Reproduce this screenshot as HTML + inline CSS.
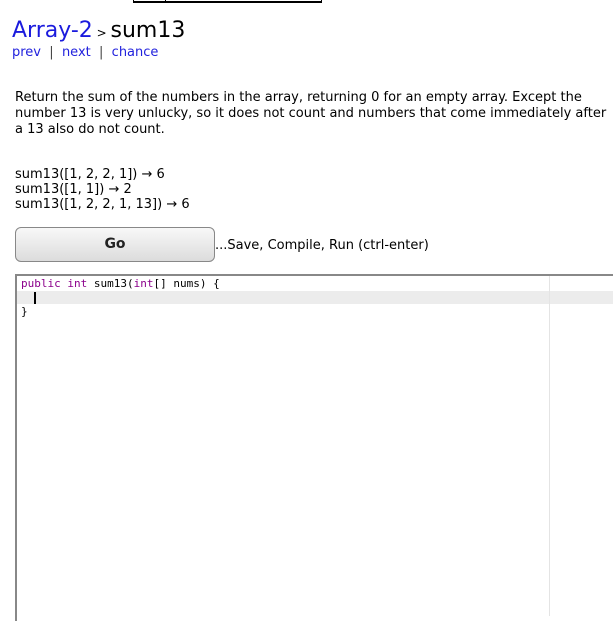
<!DOCTYPE html>
<html><head><style>
body{margin:0;width:613px;height:613px;overflow:hidden;background:#fff;font-family:Verdana,"DejaVu Sans",sans-serif;position:relative}
.a{position:absolute}
a{color:#2222dd;text-decoration:none}
</style></head><body>
<div class="a" style="left:133px;top:0;width:187px;height:1px;border:1px solid #000;border-top:none;border-bottom:2px solid #000"></div>
<div class="a" style="left:165px;top:0;width:1px;height:3px;background:#000"></div>
<div class="a" style="left:12px;top:18px;font-size:22px;white-space:nowrap"><a style="color:#1a1add">Array-2</a><span style="font-size:12px"> &gt; </span>sum13</div>
<div class="a" style="left:12px;top:45px;font-size:13px;color:#444;white-space:nowrap"><a>prev</a> &nbsp;| &nbsp;<a>next</a> &nbsp;| &nbsp;<a>chance</a></div>
<div class="a" style="left:15px;top:90px;width:600px;font-size:13px;line-height:16px;color:#000">Return the sum of the numbers in the array, returning 0 for an empty array. Except the number 13 is very unlucky, so it does not count and numbers that come immediately after a 13 also do not count.</div>
<div class="a" style="left:15px;top:167px;font-size:13px;line-height:15px">sum13([1, 2, 2, 1]) → 6<br>sum13([1, 1]) → 2<br>sum13([1, 2, 2, 1, 13]) → 6</div>
<div class="a" style="left:15px;top:227px;width:198px;height:33px;border:1px solid #888;border-radius:6px;background:linear-gradient(#f8f8f8,#dcdcdc);text-align:center;line-height:33px;font-weight:bold;font-size:14px;color:#222">Go</div>
<div class="a" style="left:215px;top:238px;font-size:13px">...Save, Compile, Run (ctrl-enter)</div>
<div class="a" style="left:15px;top:274px;width:600px;height:345px;border:2px solid #888;border-right:none;border-bottom:none"></div>
<div class="a" style="left:17px;top:291px;width:596px;height:13px;background:#ececec"></div>
<div class="a" style="left:549px;top:276px;width:1px;height:340px;background:#e4e4e4"></div>
<div class="a" style="left:21px;top:277px;font-family:'DejaVu Sans Mono','Liberation Mono',monospace;font-size:11px;line-height:14px;color:#000;white-space:pre"><span style="color:#8b008b">public</span> <span style="color:#8b008b">int</span> sum13(<span style="color:#8b008b">int</span>[] nums) {

}</div>
<div class="a" style="left:34px;top:292px;width:2px;height:12px;background:#000"></div>
</body></html>
